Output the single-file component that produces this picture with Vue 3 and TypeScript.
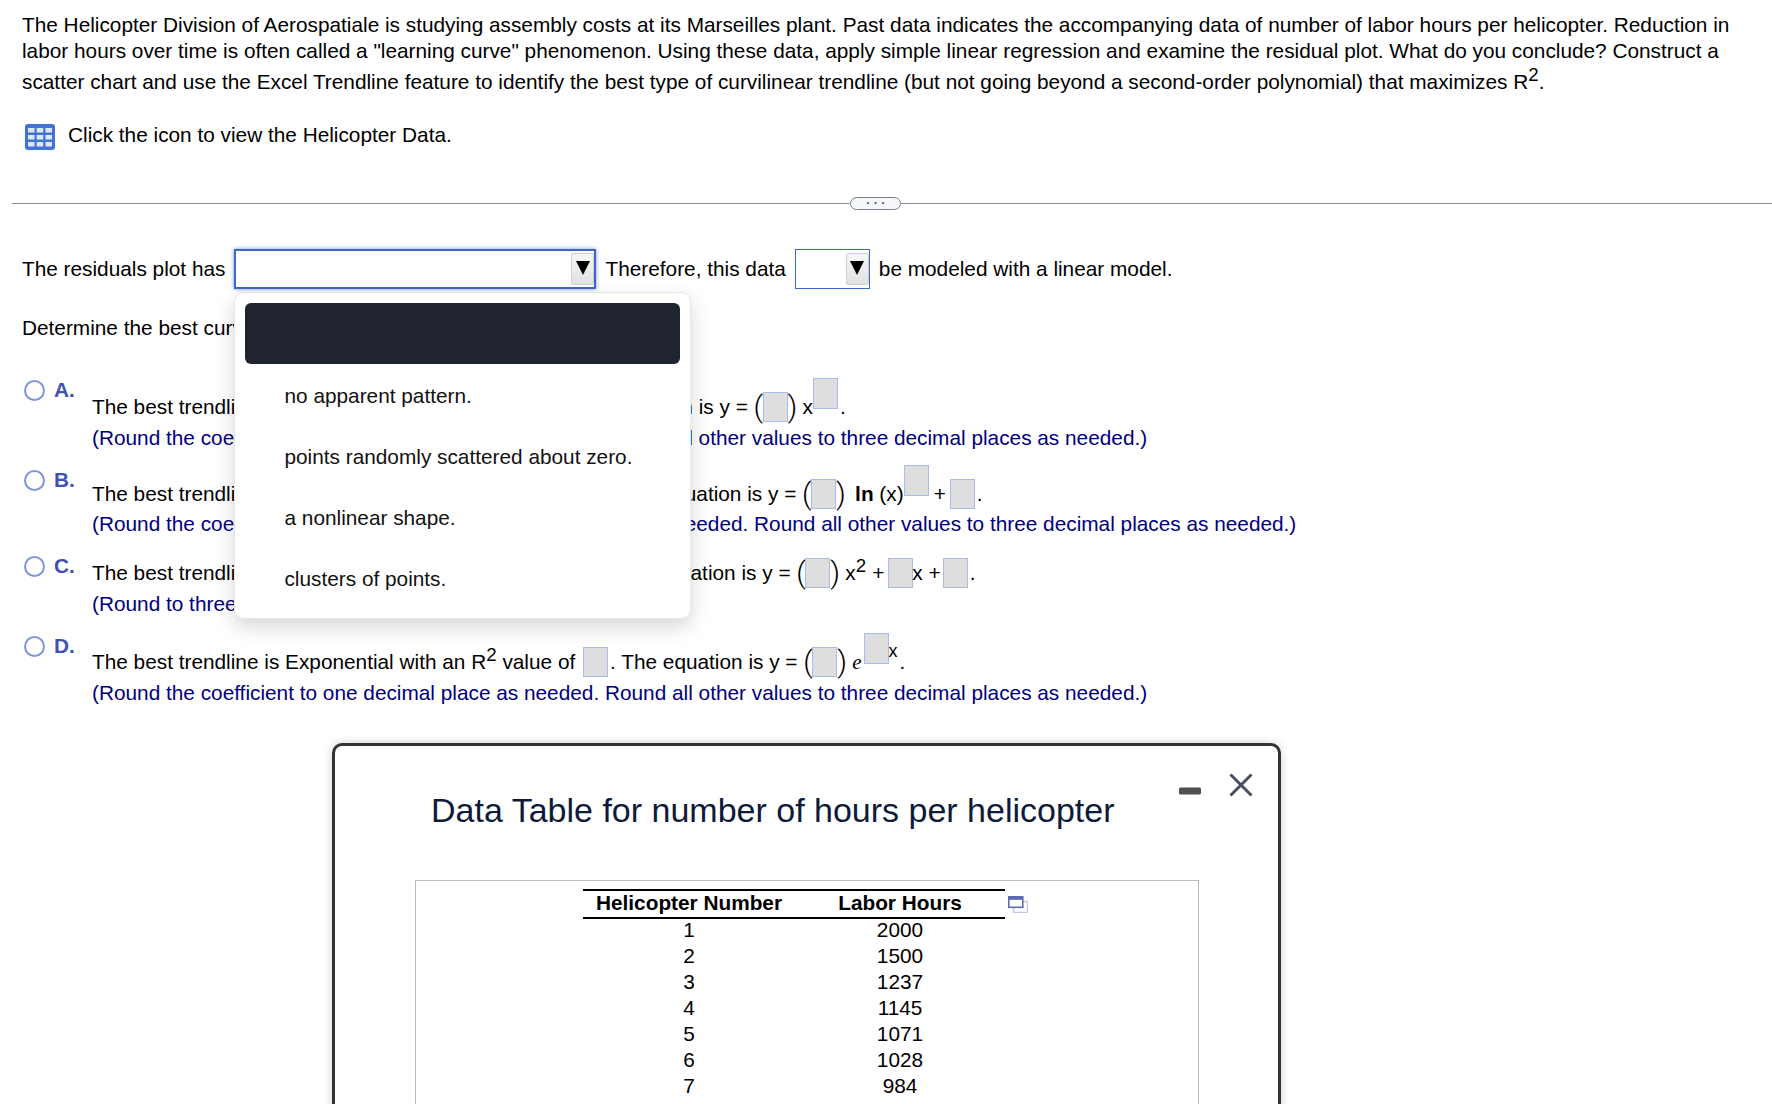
<script setup lang="ts">
const options: string[] = [
  'no apparent pattern.',
  'points randomly scattered about zero.',
  'a nonlinear shape.',
  'clusters of points.',
]
const rows: [number, number][] = [
  [1, 2000],
  [2, 1500],
  [3, 1237],
  [4, 1145],
  [5, 1071],
  [6, 1028],
  [7, 984],
]
</script>

<template>
  <div class="page">
    <div class="question">
      <div class="qline">The Helicopter Division of Aerospatiale is studying assembly costs at its Marseilles plant. Past data indicates the accompanying data of number of labor hours per helicopter. Reduction in</div>
      <div class="qline">labor hours over time is often called a "learning curve" phenomenon. Using these data, apply simple linear regression and examine the residual plot. What do you conclude? Construct a</div>
      <div class="qline third">scatter chart and use the Excel Trendline feature to identify the best type of curvilinear trendline (but not going beyond a second-order polynomial) that maximizes R<sup class="sq">2</sup>.</div>
    </div>

    <div class="data-link">
      <svg class="grid-icon" width="30" height="26" viewBox="0 0 30 26">
        <rect width="30" height="26" rx="3" fill="#4274d8" />
        <g fill="#dfe8fa">
          <rect x="3" y="4" width="6.5" height="4.5" /><rect x="11.7" y="4" width="6.5" height="4.5" /><rect x="20.5" y="4" width="6.5" height="4.5" />
          <rect x="3" y="11" width="6.5" height="4.5" /><rect x="11.7" y="11" width="6.5" height="4.5" /><rect x="20.5" y="11" width="6.5" height="4.5" />
          <rect x="3" y="18" width="6.5" height="4.5" /><rect x="11.7" y="18" width="6.5" height="4.5" /><rect x="20.5" y="18" width="6.5" height="4.5" />
        </g>
      </svg>
      <span class="link-text">Click the icon to view the Helicopter Data.</span>
    </div>

    <div class="divider">
      <div class="rule rule-left"></div>
      <div class="more">•••</div>
      <div class="rule rule-right"></div>
    </div>

    <div class="answer-row">
      <span>The residuals plot has</span>
      <div class="select wide">
        <div class="arrow"><i></i></div>
        <div class="popup">
          <div class="popup-head"></div>
          <div v-for="o in options" :key="o" class="popup-item">{{ o }}</div>
        </div>
      </div>
      <span>Therefore, this data</span>
      <div class="select narrow">
        <div class="arrow"><i></i></div>
      </div>
      <span>be modeled with a linear model.</span>
    </div>

    <div class="determine">Determine the best curvilinear trendline below.</div>

    <div class="choices">
      <div class="choice choice-a">
        <div class="radio"></div>
        <div class="letter">A.</div>
        <div class="body">
          <div class="eq">
            <span>The best trendline is Power with an R<sup class="sq">2</sup> value of </span>
            <span class="box rv"></span>
            <span>. The equation is y = </span>
            <span class="paren">(</span><span class="box"></span><span class="paren">)</span>
            <span class="gap-x">x</span>
            <span class="box up"></span>
            <span class="dot">.</span>
          </div>
          <div class="note">(Round the coefficient to one decimal place as needed. Round all other values to three decimal places as needed.)</div>
        </div>
      </div>

      <div class="choice choice-b">
        <div class="radio"></div>
        <div class="letter">B.</div>
        <div class="body">
          <div class="eq">
            <span>The best trendline is Logarithmic with an R<sup class="sq">2</sup> value of </span>
            <span class="box rv"></span>
            <span>. The equation is y = </span>
            <span class="paren">(</span><span class="box"></span><span class="paren">)</span>
            <span class="ln"><b>ln</b> (x)</span>
            <span class="box up"></span>
            <span class="plus plus-b">+</span>
            <span class="box"></span>
            <span class="dot">.</span>
          </div>
          <div class="note">(Round the coefficient and the b-value to one decimal place as needed. Round all other values to three decimal places as needed.)</div>
        </div>
      </div>

      <div class="choice choice-c">
        <div class="radio"></div>
        <div class="letter">C.</div>
        <div class="body">
          <div class="eq">
            <span>The best trendline is Polynomial with an R<sup class="sq">2</sup> value of </span>
            <span class="box rv"></span>
            <span>. The equation is y = </span>
            <span class="paren">(</span><span class="box"></span><span class="paren">)</span>
            <span class="gap-x">x<sup class="sq">2</sup></span>
            <span class="plus">+</span>
            <span class="box"></span>
            <span class="xp">x +</span>
            <span class="box"></span>
            <span class="dot">.</span>
          </div>
          <div class="note">(Round to three decimal places as needed.)</div>
        </div>
      </div>

      <div class="choice choice-d">
        <div class="radio"></div>
        <div class="letter">D.</div>
        <div class="body">
          <div class="eq">
            <span>The best trendline is Exponential with an R<sup class="sq">2</sup> value of </span>
            <span class="box rv"></span>
            <span>. The equation is y = </span>
            <span class="paren">(</span><span class="box"></span><span class="paren">)</span>
            <span class="e">e</span>
            <span class="box up"></span>
            <span class="exp-x">x</span>
            <span class="dot">.</span>
          </div>
          <div class="note">(Round the coefficient to one decimal place as needed. Round all other values to three decimal places as needed.)</div>
        </div>
      </div>
    </div>

    <div class="dialog">
      <div class="dialog-head">
        <h2>Data Table for number of hours per helicopter</h2>
        <div class="controls">
          <svg class="minimize" width="22" height="8" viewBox="0 0 22 8"><rect width="22" height="7" y="0.5" rx="1.5" fill="#505050" /></svg>
          <svg width="24" height="24" viewBox="0 0 24 24"><path d="M1.5 1.5 22.5 22.5M22.5 1.5 1.5 22.5" stroke="#46505e" stroke-width="3" fill="none" /></svg>
        </div>
      </div>
      <div class="table-box">
        <div class="table">
          <div class="thead">
            <span>Helicopter Number</span>
            <span>Labor Hours</span>
          </div>
          <div v-for="r in rows" :key="r[0]" class="trow">
            <span>{{ r[0] }}</span>
            <span>{{ r[1] }}</span>
          </div>
        </div>
        <svg class="copy" width="20" height="17" viewBox="0 0 20 17">
          <rect x="5.5" y="5.5" width="14" height="11" fill="#fff" stroke="#c3c9e8" stroke-width="1.5" />
          <rect x="0.8" y="0.8" width="14" height="10.5" fill="#fff" stroke="#5a66b0" stroke-width="1.5" />
          <rect x="0.8" y="0.8" width="14" height="3" fill="#5a66b0" />
        </svg>
      </div>
    </div>
  </div>
</template>

<style scoped>
.page {
  width: 1772px;
  height: 1104px;
  overflow: hidden;
  font-family: "Liberation Sans", Arial, sans-serif;
  font-size: 20.8px;
  color: #000;
  background: #fff;
}
.question {
  padding: 12px 0 0 22px;
}
.qline {
  height: 26px;
  line-height: 26px;
  white-space: nowrap;
}
.third {
  margin-top: 5px;
}
.sq {
  font-size: 0.9em;
  line-height: 0;
  vertical-align: 8px;
}
.data-link {
  margin: 29px 0 0 25px;
  height: 26px;
  display: flex;
  align-items: center;
  gap: 13px;
}
.link-text {
  margin-bottom: 5px;
}
.divider {
  margin: 47px 0 0 12px;
  height: 13px;
  display: flex;
  align-items: center;
}
.rule {
  height: 1px;
  background: #8a9099;
}
.rule-left {
  width: 838px;
}
.rule-right {
  flex: 1;
}
.more {
  width: 51px;
  height: 13px;
  box-sizing: border-box;
  border: 1.5px solid #76808c;
  border-radius: 7px;
  background: #f5f7f9;
  font-size: 7px;
  line-height: 10px;
  letter-spacing: 5px;
  padding-left: 5px;
  text-align: center;
  color: #3d4650;
}
.answer-row {
  margin-top: 39px;
  padding-left: 22px;
  height: 40px;
  display: flex;
  align-items: center;
  gap: 9px;
}
.select {
  position: relative;
  box-sizing: border-box;
  height: 40px;
  background: #fff;
  display: flex;
  align-items: center;
  justify-content: flex-end;
}
.wide {
  width: 362px;
  border: 2px solid #3f68c4;
  box-shadow: 0 0 4px rgba(63, 104, 196, 0.7);
}
.narrow {
  width: 75px;
  border: 1px solid #3f68c4;
}
.arrow {
  box-sizing: border-box;
  width: 23px;
  height: 32px;
  background: linear-gradient(#f6f6f6, #e2e2e2);
  border: 1px solid #cfcfcf;
  border-radius: 2px;
  display: flex;
  justify-content: center;
  padding-top: 7px;
}
.arrow i {
  display: block;
  width: 0;
  height: 0;
  border-left: 7px solid transparent;
  border-right: 7px solid transparent;
  border-top: 14px solid #000;
}
.popup {
  position: absolute;
  z-index: 5;
  top: 41px;
  left: -2px;
  width: 457px;
  height: 327px;
  box-sizing: border-box;
  padding: 10px;
  background: #fff;
  border: 1px solid #e6e6e6;
  border-radius: 9px;
  box-shadow: 0 8px 20px rgba(0, 0, 0, 0.16);
}
.popup-head {
  height: 61px;
  background: #1f2430;
  border-radius: 6px;
  margin-bottom: 1px;
}
.popup-item {
  height: 61px;
  line-height: 61px;
  padding-left: 39px;
  color: #111;
}
.determine {
  margin-top: 26px;
  padding-left: 22px;
  height: 26px;
  line-height: 26px;
}
.choices {
  margin-top: 39px;
}
.choice {
  display: flex;
  align-items: flex-start;
  padding-left: 24px;
}
.choice-a {
  height: 90px;
}
.choice-b {
  height: 86px;
}
.choice-c {
  height: 80px;
}
.choice-d {
  height: 70px;
}
.radio {
  width: 21px;
  height: 21px;
  box-sizing: border-box;
  border: 2px solid #7f97d8;
  border-radius: 50%;
  background: #fff;
}
.letter {
  width: 38px;
  margin-left: 9px;
  height: 20px;
  line-height: 20px;
  font-weight: 700;
  color: #3f51b5;
}
.choice-a .body {
  padding-top: 12px;
}
.choice-b .body {
  padding-top: 9px;
}
.choice-c .body {
  padding-top: 2px;
}
.choice-d .body {
  padding-top: 11px;
}
.eq {
  height: 30px;
  display: flex;
  align-items: center;
  white-space: pre;
}
.note {
  margin-top: 3px;
  height: 26px;
  line-height: 26px;
  color: #00007f;
  white-space: nowrap;
}
.choice-b .note {
  margin-top: 2px;
}
.box {
  flex: none;
  width: 25px;
  height: 30px;
  box-sizing: border-box;
  background: #dedede;
  border: 1px solid #a9bde8;
}
.rv {
  margin: 0 2px;
}
.up {
  height: 31px;
  margin-bottom: 28px;
}
.paren {
  flex: none;
  width: 9px;
  font-family: Roboto, "Liberation Sans", sans-serif;
  font-size: 30px;
  line-height: 30px;
  text-align: center;
  font-weight: 300;
}
.gap-x {
  margin-left: 6px;
}
.ln {
  margin-left: 10px;
}
.plus {
  margin: 0 4px 0 6px;
}
.plus-b {
  margin-left: 5px;
}
.xp {
  margin: 0 2px 0 -1px;
}
.dot {
  margin-left: 2px;
}
.e {
  margin: 0 2px 0 6px;
  font-family: "Liberation Serif", serif;
  font-style: italic;
}
.exp-x {
  font-size: 18px;
  margin: 0 0 22px 0;
}
.dialog {
  margin: 37px 0 0 332px;
  width: 949px;
  height: 420px;
  box-sizing: border-box;
  border: 3px solid #333;
  border-radius: 10px;
  box-shadow: 0 0 10px rgba(0, 0, 0, 0.18);
  background: #fff;
}
.dialog-head {
  display: flex;
  align-items: flex-start;
  justify-content: space-between;
  padding: 27px 25px 0 96px;
  height: 107px;
  box-sizing: border-box;
}
.dialog-head h2 {
  margin: 14px 0 0;
  font-size: 34px;
  line-height: 46px;
  font-weight: 400;
  color: #0e1a3a;
  white-space: nowrap;
}
.controls {
  display: flex;
  align-items: flex-end;
  gap: 28px;
}
.minimize {
  margin-bottom: 2px;
}
.table-box {
  position: relative;
  margin: 27px 0 0 80px;
  width: 784px;
  height: 260px;
  box-sizing: border-box;
  border: 1px solid #bdbdbd;
  padding: 8px 0 0 167px;
}
.table {
  width: 422px;
  border-top: 2px solid #000;
}
.thead,
.trow {
  display: grid;
  grid-template-columns: 212px 210px;
  text-align: center;
}
.thead {
  height: 26px;
  line-height: 24px;
  font-weight: 700;
  border-bottom: 2px solid #000;
  margin-bottom: -2px;
}
.trow {
  height: 26px;
  line-height: 26px;
}
.copy {
  position: absolute;
  left: 592px;
  top: 15px;
}
</style>

<style>
html,
body {
  margin: 0;
  overflow: hidden;
}
</style>
